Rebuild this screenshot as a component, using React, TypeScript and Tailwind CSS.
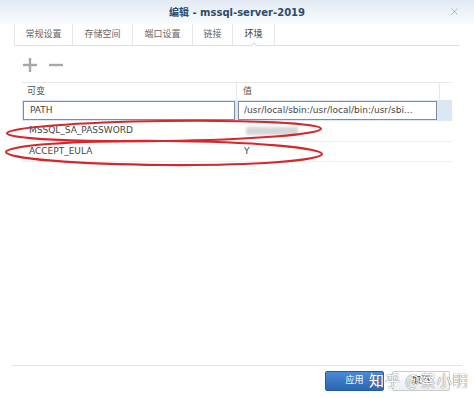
import { Plus, Minus, X } from "lucide-react";

const tabs = [
  { label: "常规设置", w: "w-[59px]" },
  { label: "存储空间", w: "w-[60px]" },
  { label: "端口设置", w: "w-[60px]" },
  { label: "链接", w: "w-[40px]" },
  { label: "环境", w: "w-[42px]", active: true },
];

const font = { fontFamily: '"DejaVu Sans", "Noto Sans CJK SC", sans-serif' };

export default function App() {
  return (
    <div className="relative flex h-[398px] w-[474px] flex-col overflow-hidden bg-white" style={font}>
      {/* title bar */}
      <div className="relative flex h-[24px] shrink-0 items-center justify-center bg-gradient-to-b from-[#e3eaf3] to-[#f9fbfd]">
        <span className="text-[10px] font-bold text-[#2f4a6c]">编辑 - mssql-server-2019</span>
        <X className="absolute right-[14px] top-[6px] h-[11px] w-[11px] text-[#9aa3ad]" strokeWidth={1.6} />
      </div>

      {/* tabs */}
      <div className="mx-[14px] flex h-[22px] shrink-0 items-stretch border-b border-[#dcdfe3]">
        {tabs.map((t) => (
          <div key={t.label} className={`relative flex ${t.w} items-center justify-center border-r border-[#e4e6e9] first:border-l text-[9px] ${t.active ? "text-[#333]" : "text-[#666]"}`}>
            {t.label}
            {t.active && (
              <span className="absolute bottom-[-1px] left-1/2 h-[5px] w-[5px] -translate-x-1/2 translate-y-1/2 rotate-45 border-l border-t border-[#dcdfe3] bg-white" />
            )}
          </div>
        ))}
      </div>

      {/* toolbar */}
      <div className="flex h-[36px] shrink-0 items-center gap-[2px] pl-[18px] pt-[2px] text-[#a3a7ab]">
        <Plus className="h-[24px] w-[24px]" strokeWidth={2.4} strokeLinecap="butt" />
        <Minus className="h-[24px] w-[24px]" strokeWidth={2.4} strokeLinecap="butt" />
      </div>

      {/* table */}
      <div className="ml-[22px] w-[430px] text-[9px] text-[#444]">
        <div className="flex h-[18px] border-t border-[#e6e8ea] text-[#555]">
          <div className="flex w-[215px] items-center border-r border-[#e6e8ea] pl-[5px]">可变</div>
          <div className="flex w-[203px] items-center border-r border-[#e6e8ea] pl-[6px]">值</div>
        </div>
        <div className="flex h-[21px] items-center gap-[3px] bg-[#dbe7f5] pl-[1px]">
          <div className="flex h-[19px] w-[212px] items-center border border-[#7d8d9b] bg-white pl-[6px]">PATH</div>
          <div className="flex h-[19px] w-[199px] items-center border border-[#7d8d9b] bg-white pl-[5px]">/usr/local/sbin:/usr/local/bin:/usr/sbi...</div>
        </div>
        <div className="flex h-[21px] items-center border-b border-[#eef0f2]">
          <div className="w-[216px] pl-[7px]">MSSQL_SA_PASSWORD</div>
          <div className="pl-[8px]">
            <div className="h-[8px] w-[52px] bg-[#d4d6d8] blur-[1.5px]" />
          </div>
        </div>
        <div className="flex h-[20px] items-center border-b border-[#eef0f2]">
          <div className="w-[216px] pl-[7px]">ACCEPT_EULA</div>
          <div className="pl-[6px]">Y</div>
        </div>
      </div>

      <div className="flex-1" />

      {/* footer */}
      <div className="mx-[12px] flex h-[33px] shrink-0 items-start justify-end gap-[8px] border-t border-[#e2e4e6] pr-[12px] pt-[5px]">
        <button className="flex h-[20px] w-[59px] items-center justify-center rounded-[2px] border border-[#2458a1] bg-gradient-to-b from-[#4a8ad6] to-[#2b66b3] text-[9px] text-white">
          应用
        </button>
        <button className="flex h-[20px] w-[58px] items-center justify-center rounded-[2px] border border-[#c9ccd0] bg-gradient-to-b from-[#ffffff] to-[#eceef0] text-[9px] text-[#333]">
          取消
        </button>
      </div>

      {/* annotation ellipses */}
      <svg className="pointer-events-none absolute left-0 top-0" width="474" height="398">
        <ellipse cx="164" cy="131" rx="157" ry="10" fill="none" stroke="#d8262a" strokeWidth="2.2" transform="rotate(-0.8 164 131)" />
        <ellipse cx="164" cy="153" rx="158" ry="12" fill="none" stroke="#d8262a" strokeWidth="2.2" transform="rotate(0.4 164 153)" />
      </svg>

      {/* watermark */}
      <div
        className="pointer-events-none absolute left-[369px] top-[369px] text-[15px] tracking-[1px] text-white [text-shadow:0_0_1px_#6b7280,0_0_1px_#6b7280]"
        style={{ fontFamily: '"Noto Sans CJK SC", sans-serif' }}
      >
        知乎 @蔡小明
      </div>
    </div>
  );
}
